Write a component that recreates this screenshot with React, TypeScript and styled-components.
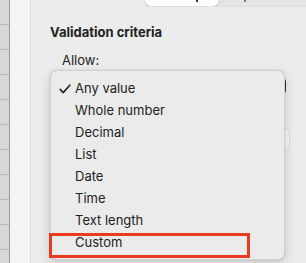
import { FC } from 'react';
import styled, { createGlobalStyle } from 'styled-components';

const options = ['Any value', 'Whole number', 'Decimal', 'List', 'Date', 'Time', 'Text length', 'Custom'];

const GlobalStyle = createGlobalStyle`
  html, body {
    margin: 0;
    padding: 0;
    background: #ececec;
  }
  body {
    font-family: Inter, "Noto Sans", "Liberation Sans", sans-serif;
    color: #222;
  }
`;

const App: FC = () => {
  const selected = 0;
  const highlighted = 7;

  return (
    <Screen>
      <GlobalStyle />
      <SheetColumn />
      <Gutter />
      <Panel>
        <TabBar>
          <Tab active>
            <Tick />
          </Tab>
          <Tab>
            <Tick />
          </Tab>
        </TabBar>
        <Title>Validation criteria</Title>
        <FieldLabel>Allow:</FieldLabel>
        <SelectButton>
          <SelectArrow />
        </SelectButton>
        <GhostField />
        <Menu>
          {options.map((opt, i) => (
            <MenuItem key={opt}>
              <Check>
                {i === selected && (
                  <svg width="12" height="10" viewBox="0 0 12 10">
                    <path d="M1.2 5.4 L4.2 8.6 L10.8 1.2" fill="none" stroke="#222" strokeWidth="1.6" strokeLinecap="round" strokeLinejoin="round" />
                  </svg>
                )}
              </Check>
              {opt}
              {i === highlighted && <Marker />}
            </MenuItem>
          ))}
        </Menu>
      </Panel>
    </Screen>
  );
};

export default App;

const Screen = styled.div`
  display: flex;
  width: 306px;
  height: 263px;
  overflow: hidden;
  background: #ececec;
`;

const SheetColumn = styled.div`
  width: 9px;
  flex-shrink: 0;
  background-color: #d8d8d8;
  background-image: repeating-linear-gradient(
    to bottom,
    transparent 0px,
    transparent 24px,
    #b9b9b9 24px,
    #b9b9b9 25px
  );
  border-right: 1px solid #9a9a9a;
`;

const Gutter = styled.div`
  width: 20px;
  flex-shrink: 0;
  background: #f4f4f4;
  border-right: 1px solid #dcdcdc;
`;

const Panel = styled.div`
  position: relative;
  flex: 1;
  padding: 0 0 0 19px;
  background: #ececec;
`;

const TabBar = styled.div`
  display: flex;
  align-items: flex-end;
  height: 6px;
  margin-left: 95px;
  overflow: hidden;
  border-bottom: 1px solid #e0e0e0;
`;

const Tab = styled.div<{ active?: boolean }>`
  position: relative;
  flex-shrink: 0;
  height: 22px;
  width: ${p => (p.active ? '74px' : '100px')};
  box-sizing: border-box;
  background: ${p => (p.active ? '#ffffff' : '#e4e4e4')};
  border-radius: 0 0 6px 6px;
  box-shadow: ${p => (p.active ? '0 0.5px 1.5px rgba(0,0,0,0.3)' : 'none')};
  border-left: ${p => (p.active ? 'none' : '1px solid #d6d6d6')};

  & > span {
    left: ${p => (p.active ? '51px' : '24px')};
    opacity: ${p => (p.active ? 1 : 0.6)};
  }
`;

const Tick = styled.span`
  position: absolute;
  bottom: 4px;
  width: 2px;
  height: 2px;
  background: #333;
`;

const Title = styled.div`
  margin-top: 17px;
  font-size: 13px;
  font-weight: 700;
  line-height: 16px;
`;

const FieldLabel = styled.div`
  margin: 12px 0 0 12px;
  font-size: 13px;
  line-height: 16px;
`;

const SelectButton = styled.div`
  position: relative;
  margin-top: 9px;
  width: 236px;
  height: 18px;
  border-radius: 5px;
  background: #ffffff;
`;

const SelectArrow = styled.div`
  position: absolute;
  right: 0;
  top: 0;
  width: 16px;
  height: 18px;
  border-radius: 0 5px 5px 0;
  background: #2a2a2a;
`;

const GhostField = styled.div`
  margin: 33px 0 0 230px;
  width: 8px;
  height: 21px;
  border-radius: 0 5px 5px 0;
  background: #f5f5f5;
  border: 1px solid #dddddd;
`;

const Menu = styled.div`
  position: absolute;
  left: 19px;
  top: 70px;
  width: 233px;
  padding: 6px 0;
  border-radius: 7px;
  background: #ebebeb;
  border: 0.5px solid #d2d2d2;
  box-shadow: 0 4px 12px rgba(0, 0, 0, 0.16), 0 0 1px rgba(0, 0, 0, 0.25);
`;

const MenuItem = styled.div`
  position: relative;
  display: flex;
  align-items: center;
  height: 22px;
  font-size: 13px;
  color: #222;
`;

const Check = styled.span`
  display: flex;
  align-items: center;
  justify-content: center;
  width: 24px;
  padding: 1px 0 0 3px;
  box-sizing: border-box;
`;

const Marker = styled.div`
  position: absolute;
  left: -2px;
  top: 2px;
  width: 201px;
  height: 25px;
  box-sizing: border-box;
  border: 3px solid #ea3a1f;
`;
